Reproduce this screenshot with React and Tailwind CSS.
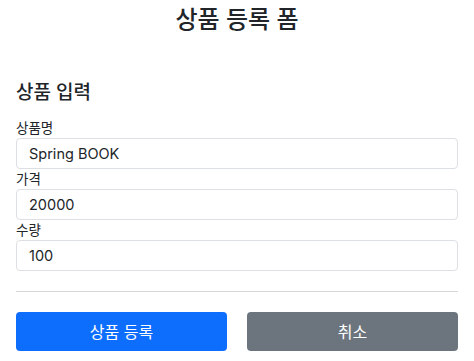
import React from 'react';

const font = { fontFamily: 'Inter, "Noto Sans CJK KR", "Noto Sans", sans-serif' };

function Field({ label, value }) {
  return (
    <div>
      <div className="h-[20px] flex items-center text-[13.5px] text-[#212529]">{label}</div>
      <input
        readOnly
        value={value}
        className="block w-full h-[31px] px-3 text-[14.5px] text-[#212529] bg-white border border-[#dcdfe3] rounded-[4px] outline-none"
        style={font}
      />
    </div>
  );
}

export default function App() {
  return (
    <div className="w-[474px] h-[361px] bg-white px-4 text-[#212529] overflow-hidden" style={font}>
      <h2 className="h-[40px] flex items-center justify-center text-[24px] font-medium">상품 등록 폼</h2>

      <h4 className="mt-[40px] h-[26px] flex items-center text-[19px] font-medium">상품 입력</h4>

      <div className="mt-[12px]">
        <Field label="상품명" value="Spring BOOK" />
        <Field label="가격" value="20000" />
        <Field label="수량" value="100" />
      </div>

      <hr className="mt-[20px] border-t border-[#d6d8da]" />

      <div className="mt-[20px] grid grid-cols-2 gap-5">
        <button className="h-[39px] rounded-[4px] bg-[#0d6efd] text-white text-[16px]">상품 등록</button>
        <button className="h-[39px] rounded-[4px] bg-[#6c757d] text-white text-[16px]">취소</button>
      </div>
    </div>
  );
}
